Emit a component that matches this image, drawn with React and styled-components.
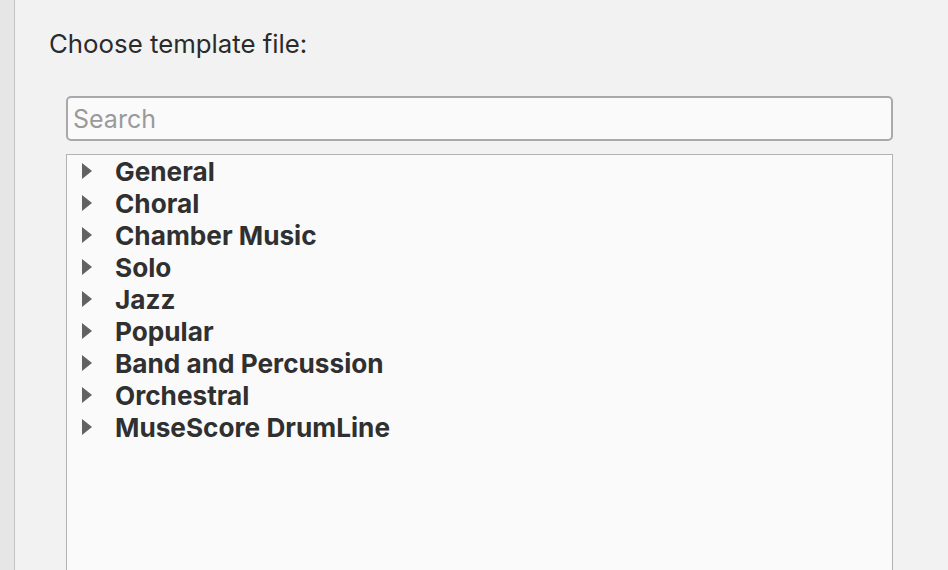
import React from "react";
import styled, { createGlobalStyle } from "styled-components";

const GlobalStyle = createGlobalStyle`
  html, body {
    margin: 0;
    padding: 0;
    background: #f2f2f2;
  }
  body {
    font-family: Inter, "Noto Sans", sans-serif;
    overflow: hidden;
  }
`;

const Page = styled.div`
  display: flex;
  width: 948px;
  height: 570px;
  overflow: hidden;
`;

const SideStrip = styled.div`
  width: 14px;
  flex-shrink: 0;
  background: #e6e6e6;
  border-right: 1px solid #c4c4c4;
`;

const Main = styled.div`
  flex: 1;
  display: flex;
  flex-direction: column;
  padding: 28px 55px 0 34px;
  background: #f2f2f2;
`;

const Title = styled.div`
  font-size: 25.8px;
  line-height: 32px;
  color: #2b2b2b;
  height: 32px;
`;

const Content = styled.div`
  display: flex;
  flex-direction: column;
  padding-left: 17px;
  margin-top: 36px;
`;

const SearchInput = styled.input`
  box-sizing: border-box;
  height: 45px;
  width: 100%;
  border: 2px solid #a9a9a9;
  border-radius: 5px;
  background: #fafafa;
  padding: 0 5px;
  font-family: Inter, "Noto Sans", sans-serif;
  font-size: 25px;
  color: #333;
  outline: none;

  &::placeholder {
    color: #9a9a9a;
  }
`;

const List = styled.div`
  margin-top: 13px;
  border: 1px solid #b3b3b3;
  border-bottom: none;
  background: #fafafa;
  height: 420px;
`;

const Row = styled.div`
  display: flex;
  align-items: center;
  height: 32px;
  padding-left: 15px;
`;

const Arrow = styled.span`
  width: 0;
  height: 0;
  border-top: 8px solid transparent;
  border-bottom: 8px solid transparent;
  border-left: 10px solid #626262;
  margin-right: 23px;
`;

const Label = styled.span`
  font-size: 26.2px;
  font-weight: 700;
  color: #303030;
`;

const categories = [
  "General",
  "Choral",
  "Chamber Music",
  "Solo",
  "Jazz",
  "Popular",
  "Band and Percussion",
  "Orchestral",
  "MuseScore DrumLine",
];

export default function App() {
  return (
    <Page>
      <GlobalStyle />
      <SideStrip />
      <Main>
        <Title>Choose template file:</Title>
        <Content>
          <SearchInput placeholder="Search" />
          <List>
            {categories.map((c) => (
              <Row key={c}>
                <Arrow />
                <Label>{c}</Label>
              </Row>
            ))}
          </List>
        </Content>
      </Main>
    </Page>
  );
}
